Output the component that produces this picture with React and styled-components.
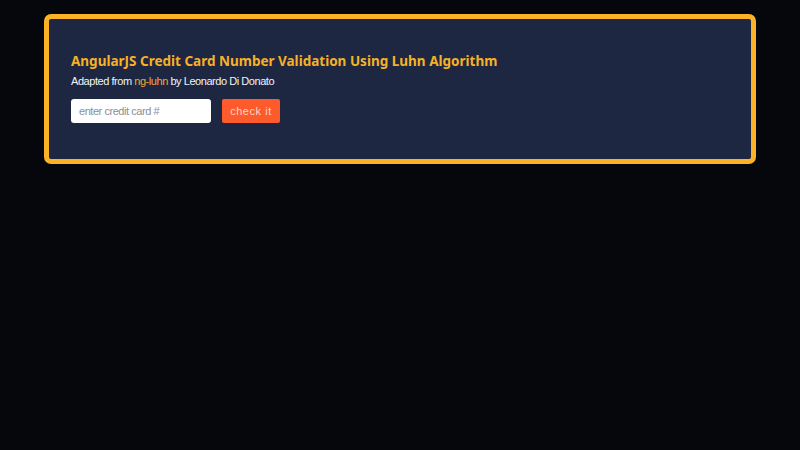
import React from "react";
import styled, { createGlobalStyle } from "styled-components";

const Global = createGlobalStyle`
  html, body { margin: 0; padding: 0; background: #05070d; }
  body { font-family: "Liberation Sans", Arial, sans-serif; }
`;

const Page = styled.div`
  padding: 14px 44px;
`;

const Card = styled.section`
  box-sizing: border-box;
  height: 150px;
  border: 5px solid #fbb227;
  border-radius: 7px;
  background: #1d2741;
  padding: 32px 22px 0;
  display: flex;
  flex-direction: column;
`;

const Title = styled.h1`
  margin: 0;
  font-family: "Noto Sans", "Open Sans", sans-serif;
  font-weight: 700;
  font-size: 13.5px;
  line-height: 20px;
  color: #f6b128;
`;

const Sub = styled.p`
  margin: 3px 0 0;
  font-size: 11px;
  letter-spacing: -0.45px;
  line-height: 14px;
  color: #f3f4f6;
`;

const Link = styled.a`
  color: #f0a73a;
  text-decoration: none;
`;

const Row = styled.form`
  display: flex;
  gap: 11px;
  margin-top: 11px;
`;

const Input = styled.input`
  box-sizing: border-box;
  width: 140px;
  height: 24px;
  border: none;
  border-radius: 3px;
  background: #ffffff;
  padding: 0 8px;
  font-family: "Liberation Sans", Arial, sans-serif;
  font-size: 11px;
  letter-spacing: -0.45px;
  color: #333;
  outline: none;
  &::placeholder { color: #8a8f99; }
`;

const Button = styled.button`
  box-sizing: border-box;
  height: 24px;
  width: 58px;
  border: none;
  border-radius: 2px;
  background: #fe5b2c;
  color: #f6d6c8;
  font-family: "Liberation Sans", Arial, sans-serif;
  font-size: 11px;
  letter-spacing: 0.55px;
  padding: 0;
  cursor: pointer;
`;

export default function App() {
  return (
    <>
      <Global />
      <Page>
        <Card>
          <Title>AngularJS Credit Card Number Validation Using Luhn Algorithm</Title>
          <Sub>
            Adapted from <Link href="#">ng-luhn</Link> by Leonardo Di Donato
          </Sub>
          <Row onSubmit={(e) => e.preventDefault()}>
            <Input placeholder="enter credit card #" />
            <Button type="submit">check it</Button>
          </Row>
        </Card>
      </Page>
    </>
  );
}
